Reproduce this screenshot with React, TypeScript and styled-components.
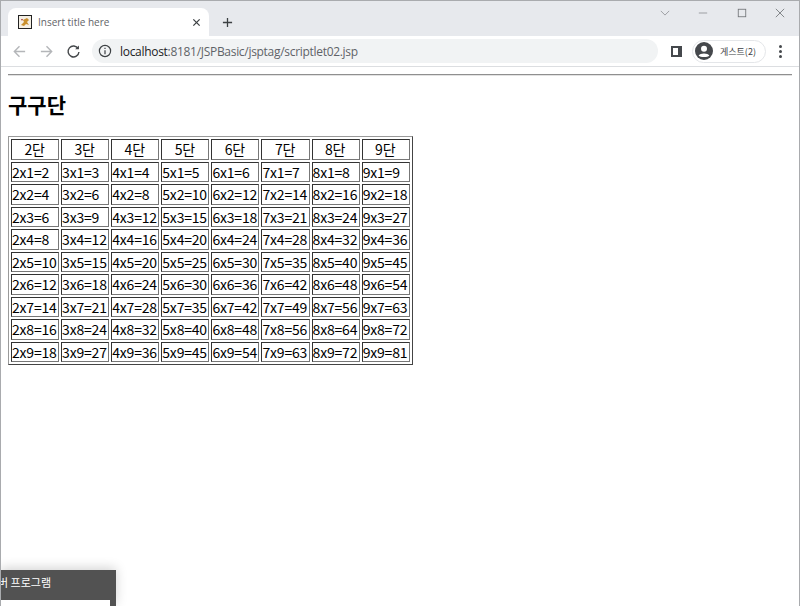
import React from 'react';
import styled, { createGlobalStyle } from 'styled-components';

const GlobalStyle = createGlobalStyle`
  html, body {
    margin: 0;
    padding: 0;
    height: 100%;
    overflow: hidden;
    background: #ffffff;
  }
  #root {
    height: 100%;
  }
`;

const dans = [2, 3, 4, 5, 6, 7, 8, 9];
const rows = [1, 2, 3, 4, 5, 6, 7, 8, 9];

export default function App() {
  return (
    <Window>
      <GlobalStyle />
      <TabStrip>
        <Tab>
          <Favicon viewBox="0 0 14 14">
            <rect x="0.5" y="0.5" width="13" height="13" fill="#f4efe4" stroke="#222" />
            <path d="M3 10 L6 7 L5 5 L9 3 L11 5 L9 7 L11 10 L8 9 L6 11 Z" fill="#c98f2c" />
            <path d="M3 4 L5 4 L4 6 Z" fill="#a33" />
          </Favicon>
          <TabTitle>Insert title here</TabTitle>
          <TabClose viewBox="0 0 10 10">
            <path d="M1.5 1.5 L8.5 8.5 M8.5 1.5 L1.5 8.5" />
          </TabClose>
        </Tab>
        <NewTab viewBox="0 0 12 12">
          <path d="M6 1 V11 M1 6 H11" />
        </NewTab>
        <Spacer />
        <WindowButton viewBox="0 0 12 12" $muted>
          <path d="M1 3.5 L6 8.5 L11 3.5" />
        </WindowButton>
        <WindowButton viewBox="0 0 12 12" $muted>
          <path d="M1 6 H11" />
        </WindowButton>
        <WindowButton viewBox="0 0 12 12">
          <rect x="1.5" y="1.5" width="9" height="9" />
        </WindowButton>
        <WindowButton viewBox="0 0 12 12">
          <path d="M1 1 L11 11 M11 1 L1 11" />
        </WindowButton>
      </TabStrip>
      <Toolbar>
        <NavIcon viewBox="0 0 16 16" $color="#b4b6b9">
          <path d="M14 8 H2.5 M8 2.5 L2.5 8 L8 13.5" />
        </NavIcon>
        <NavIcon viewBox="0 0 16 16" $color="#b4b6b9">
          <path d="M2 8 H13.5 M8 2.5 L13.5 8 L8 13.5" />
        </NavIcon>
        <NavIcon viewBox="0 0 16 16" $color="#44474a">
          <path d="M13 5 A5.8 5.8 0 1 0 13.8 8.5" />
          <path d="M13.8 1.5 V5.6 H9.7 Z" fill="#44474a" stroke="none" />
        </NavIcon>
        <AddressBar>
          <InfoIcon viewBox="0 0 14 14">
            <circle cx="7" cy="7" r="5.6" />
            <path d="M7 6.2 V10.2 M7 3.8 V5" />
          </InfoIcon>
          <Url>
            <Host>localhost</Host>:8181/JSPBasic/jsptag/scriptlet02.jsp
          </Url>
        </AddressBar>
        <SidePanelIcon />
        <ProfileChip>
          <Avatar viewBox="0 0 18 18">
            <circle cx="9" cy="9" r="9" fill="#45484c" />
            <circle cx="9" cy="6.8" r="3" fill="#ffffff" />
            <path d="M3.6 13.6 C5 10.8 13 10.8 14.4 13.6 C12.6 15.6 5.4 15.6 3.6 13.6 Z" fill="#ffffff" />
          </Avatar>
          <ProfileName>게스트(2)</ProfileName>
        </ProfileChip>
        <MenuDots>
          <i />
          <i />
          <i />
        </MenuDots>
      </Toolbar>
      <Page>
        <Rule />
        <Heading>구구단</Heading>
        <GuguTable>
          <thead>
            <tr>
              {dans.map((d) => (
                <HeadCell key={d}>{d}단</HeadCell>
              ))}
            </tr>
          </thead>
          <tbody>
            {rows.map((r) => (
              <tr key={r}>
                {dans.map((d) => (
                  <Cell key={d}>
                    {d}x{r}={d * r}
                  </Cell>
                ))}
              </tr>
            ))}
          </tbody>
        </GuguTable>
        <TaskPreview>
          <TaskTitle>버 프로그램</TaskTitle>
          <TaskThumb />
        </TaskPreview>
      </Page>
    </Window>
  );
}

const Window = styled.div`
  position: relative;
  height: 100%;
  display: flex;
  flex-direction: column;
  box-sizing: border-box;
  border: 1px solid #a9abae;
  border-bottom: 0;
  font-family: 'Noto Sans CJK KR', 'Noto Sans', sans-serif;
`;

const TabStrip = styled.div`
  height: 35px;
  flex: none;
  display: flex;
  align-items: flex-end;
  background: #e7e9ed;
  padding-left: 7px;
`;

const Tab = styled.div`
  width: 201px;
  height: 28px;
  box-sizing: border-box;
  display: flex;
  align-items: center;
  padding: 0 8px 0 10px;
  background: #ffffff;
  border-radius: 8px 8px 0 0;
`;

const Favicon = styled.svg`
  width: 14px;
  height: 14px;
  flex: none;
`;

const TabTitle = styled.span`
  flex: 1;
  margin-left: 6px;
  font-family: 'Open Sans', sans-serif;
  font-size: 10px;
  color: #5f6368;
  white-space: nowrap;
`;

const TabClose = styled.svg`
  width: 9px;
  height: 9px;
  fill: none;
  stroke: #3c4043;
  stroke-width: 1.4;
`;

const NewTab = styled.svg`
  width: 11px;
  height: 11px;
  margin: 0 0 8px 13px;
  fill: none;
  stroke: #3c4043;
  stroke-width: 1.4;
`;

const Spacer = styled.div`
  flex: 1;
`;

const WindowButton = styled.svg<{ $muted?: boolean }>`
  width: 10px;
  height: 10px;
  align-self: flex-start;
  margin: 7px 14px 0 14.5px;
  fill: none;
  stroke: ${(p) => (p.$muted ? '#8f9296' : '#6f7276')};
  stroke-width: 1;
`;

const Toolbar = styled.div`
  height: 31px;
  flex: none;
  display: flex;
  align-items: center;
  box-sizing: border-box;
  padding: 0 10px 0 11px;
  background: #ffffff;
  border-bottom: 1px solid #dcdee1;
`;

const NavIcon = styled.svg<{ $color: string }>`
  width: 15px;
  height: 15px;
  flex: none;
  margin-right: 12px;
  fill: none;
  stroke: ${(p) => p.$color};
  stroke-width: 1.5;
`;

const AddressBar = styled.div`
  flex: none;
  width: 566px;
  height: 24px;
  margin-left: -1px;
  display: flex;
  align-items: center;
  padding-left: 6px;
  box-sizing: border-box;
  background: #f1f3f4;
  border-radius: 12px;
`;

const InfoIcon = styled.svg`
  width: 14px;
  height: 14px;
  flex: none;
  fill: none;
  stroke: #3c4043;
  stroke-width: 1.2;
`;

const Url = styled.span`
  margin-left: 8px;
  font-family: 'Open Sans', sans-serif;
  font-size: 12px;
  letter-spacing: -0.3px;
  color: #5f6368;
  white-space: nowrap;
`;

const Host = styled.span`
  color: #202124;
`;

const SidePanelIcon = styled.div`
  flex: none;
  width: 11px;
  height: 11px;
  margin-left: 13px;
  box-sizing: border-box;
  border: 2px solid #45484c;
  border-right-width: 4px;
`;

const ProfileChip = styled.div`
  flex: none;
  width: 74px;
  height: 23px;
  margin-left: 10px;
  display: flex;
  align-items: center;
  box-sizing: border-box;
  padding-left: 2px;
  border: 1px solid #e4e6e9;
  border-radius: 12px;
`;

const Avatar = styled.svg`
  width: 18px;
  height: 18px;
  flex: none;
`;

const ProfileName = styled.span`
  margin-left: 7px;
  font-size: 9px;
  color: #3c4043;
  white-space: nowrap;
`;

const MenuDots = styled.div`
  flex: none;
  margin-left: 13px;
  display: flex;
  flex-direction: column;
  gap: 2px;

  i {
    display: block;
    width: 3px;
    height: 3px;
    border-radius: 50%;
    background: #45484c;
  }
`;

const Page = styled.main`
  flex: 1;
  min-height: 0;
  position: relative;
  overflow: hidden;
  padding: 7px 7px 0;
  background: #ffffff;
`;

const Rule = styled.hr`
  margin: 0;
  height: 0;
  border: 0;
  border-top: 1px solid #8f8f8f;
  border-bottom: 1px solid #e2e2e2;
`;

const Heading = styled.h2`
  margin: 15px 0 18px;
  font-size: 21px;
  line-height: 27px;
  font-weight: 700;
  color: #000000;
`;

const GuguTable = styled.table`
  border-collapse: separate;
  border-spacing: 2px;
  border: 1px solid;
  border-color: #9a9a9a #444444 #444444 #9a9a9a;
  font-size: 14px;
  letter-spacing: -0.2px;
  color: #000000;
`;

const Cell = styled.td`
  height: 18.5px;
  min-width: 45.1px;
  padding: 0 1px 0 0;
  border: 1px solid;
  border-color: #333333 #777777 #777777 #333333;
  line-height: 18px;
  white-space: nowrap;
`;

const HeadCell = styled(Cell).attrs({ as: 'th' })`
  font-weight: 400;
  text-align: center;
`;

const TaskPreview = styled.div`
  position: absolute;
  left: -1px;
  bottom: 0;
  width: 116px;
  height: 36px;
  box-sizing: border-box;
  overflow: hidden;
  background: #525252;
  box-shadow: 0 -2px 12px rgba(0, 0, 0, 0.18);
`;

const TaskTitle = styled.div`
  height: 30px;
  line-height: 24px;
  font-size: 11px;
  color: #ffffff;
  text-indent: -2px;
  white-space: nowrap;
`;

const TaskThumb = styled.div`
  width: 110px;
  height: 6px;
  background: #ffffff;
`;
